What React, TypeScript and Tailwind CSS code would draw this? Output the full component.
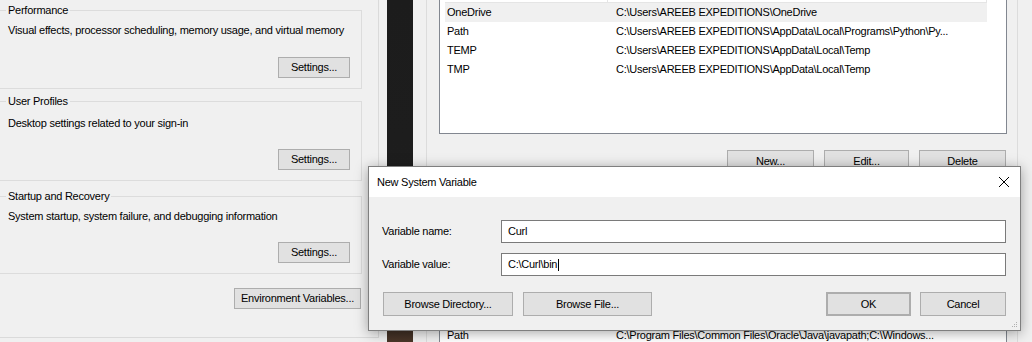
import React from "react";

function Btn({ children, className = "" }: { children: React.ReactNode; className?: string }) {
  return (
    <div className={"flex items-center justify-center whitespace-nowrap bg-[#e1e1e1] border border-[#adadad] leading-none " + className}>
      {children}
    </div>
  );
}

function GroupBox({ title, desc, mt, descMt, btnMt }: { title: string; desc: string; mt: string; descMt: string; btnMt: string }) {
  return (
    <fieldset className={"ml-[-1px] w-[363px] border border-[#dcdcdc] pl-[6px] pr-[11px] pb-[10px] flex flex-col " + mt}>
      <legend className="px-[2px] leading-[16px]">{title}</legend>
      <div className={"pl-[2px] leading-[16px] whitespace-nowrap " + descMt}>{desc}</div>
      <Btn className={"self-end w-[72px] h-[21px] " + btnMt}>Settings...</Btn>
    </fieldset>
  );
}

function LeftPanel() {
  return (
    <div className="w-[387px] shrink-0 bg-[#f0f0f0]">
      <div className="w-[379px] h-[338px] border-r border-b border-[#dadada] flex flex-col">
        <GroupBox title="Performance" desc="Visual effects, processor scheduling, memory usage, and virtual memory" mt="mt-[2px]" descMt="mt-[4px]" btnMt="mt-[19px]" />
        <GroupBox title="User Profiles" desc="Desktop settings related to your sign-in" mt="mt-[4px]" descMt="mt-[6px]" btnMt="mt-[18px]" />
        <GroupBox title="Startup and Recovery" desc="System startup, system failure, and debugging information" mt="mt-[7px]" descMt="mt-[4px]" btnMt="mt-[18px]" />
        <Btn className="self-end mr-[17px] mt-[14px] w-[127px] h-[21px]">Environment Variables...</Btn>
      </div>
    </div>
  );
}

const userVars = [
  ["OneDrive", "C:\\Users\\AREEB EXPEDITIONS\\OneDrive"],
  ["Path", "C:\\Users\\AREEB EXPEDITIONS\\AppData\\Local\\Programs\\Python\\Py..."],
  ["TEMP", "C:\\Users\\AREEB EXPEDITIONS\\AppData\\Local\\Temp"],
  ["TMP", "C:\\Users\\AREEB EXPEDITIONS\\AppData\\Local\\Temp"],
];

function Row({ name, value, hl }: { name: string; value: string; hl?: boolean }) {
  return (
    <div className={"h-[19px] w-[542px] flex items-center whitespace-nowrap " + (hl ? "bg-[#f0f0f0]" : "")}>
      <div className="w-[163px] pl-[2px]">{name}</div>
      <div className="flex-1 pl-[8px] overflow-hidden">{value}</div>
    </div>
  );
}

function RightPanel() {
  return (
    <div className="flex-1 bg-[#f0f0f0] pl-[13px] pr-[14px]">
      <div className="h-[342px] border-x border-[#dcdcdc] pl-[12px] pr-[10px] flex flex-col">
        <div className="h-[134px] shrink-0 bg-white border-x border-b border-[#828790] pl-[5px]">
          <div className="h-[3px] w-[542px] border-b border-[#e5e5e5] flex">
            <div className="w-[163px] border-r border-[#e5e5e5]" />
            <div className="flex-1 border-r border-[#e5e5e5]" />
          </div>
          {userVars.map(([n, v], i) => (
            <Row key={n + i} name={n} value={v} hl={i === 0} />
          ))}
        </div>
        <div className="flex justify-end gap-[10px] mt-[16px] mr-[1px]">
          <Btn className="w-[87px] h-[23px]">New...</Btn>
          <Btn className="w-[85px] h-[23px]">Edit...</Btn>
          <Btn className="w-[87px] h-[23px]">Delete</Btn>
        </div>
        {/* system variables list, mostly hidden under the dialog */}
        <div className="mt-[14px] flex-1 bg-white border-x border-t border-[#828790] pl-[5px]">
          <div className="h-[24px] w-[542px] border-b border-[#e5e5e5] flex">
            <div className="w-[163px] border-r border-[#e5e5e5]" />
          </div>
          <div className="h-[114px]" />
          <Row name="Path" value="C:\Program Files\Common Files\Oracle\Java\javapath;C:\Windows..." />
        </div>
      </div>
    </div>
  );
}

function Dialog() {
  return (
    <div className="absolute left-[368px] top-[166px] w-[653px] h-[165px] border border-[#7f7f7f] bg-[#f0f0f0] shadow-[0_2px_12px_rgba(0,0,0,0.35)] flex flex-col">
      <div className="h-[30px] bg-white flex items-center justify-between pl-[8px] pr-[9px]">
        <span>New System Variable</span>
        <svg width="12" height="12" viewBox="0 0 12 12" className="mr-[1px]">
          <path d="M1 1 L11 11 M11 1 L1 11" stroke="#000" strokeWidth="1" />
        </svg>
      </div>
      <div className="flex flex-col pl-[13px] pr-[14px] pt-[23px]">
        <div className="flex items-center">
          <div className="w-[119px]">Variable name:</div>
          <div className="flex-1 h-[23px] bg-white border border-[#7a7a7a] flex items-center pl-[6px]">Curl</div>
        </div>
        <div className="flex items-center mt-[10px]">
          <div className="w-[119px]">Variable value:</div>
          <div className="flex-1 h-[23px] bg-white border border-[#7a7a7a] flex items-center pl-[6px]">
            C:\Curl\bin<span className="inline-block w-[1px] h-[12px] bg-black ml-[1px]" />
          </div>
        </div>
        <div className="flex mt-[16px]">
          <Btn className="w-[130px] h-[24px] ml-[1px]">Browse Directory...</Btn>
          <Btn className="w-[129px] h-[24px] ml-[10px]">Browse File...</Btn>
          <Btn className="w-[85px] h-[24px] ml-auto border-2 border-[#0078d7]">OK</Btn>
          <Btn className="w-[86px] h-[24px] ml-[9px]">Cancel</Btn>
        </div>
      </div>
      <svg width="6" height="6" viewBox="0 0 6 6" className="absolute right-[2px] bottom-[2px]">
        <rect x="4" y="0" width="1" height="1" fill="#b0b0b0" />
        <rect x="2" y="2" width="1" height="1" fill="#b0b0b0" />
        <rect x="4" y="2" width="1" height="1" fill="#b0b0b0" />
        <rect x="0" y="4" width="1" height="1" fill="#b0b0b0" />
        <rect x="2" y="4" width="1" height="1" fill="#b0b0b0" />
        <rect x="4" y="4" width="1" height="1" fill="#b0b0b0" />
      </svg>
    </div>
  );
}

export default function App() {
  return (
    <div className="relative w-[1032px] h-[342px] overflow-hidden flex text-[11px] tracking-[-0.25px] text-black font-['Liberation_Sans',Arial,sans-serif]">
      <LeftPanel />
      <div className="w-[26px] shrink-0 bg-[linear-gradient(to_bottom,#1c1c1c_0%,#1e1e1e_80%,#2f2520_92%,#4a3628_100%)]" />
      <RightPanel />
      <Dialog />
    </div>
  );
}
